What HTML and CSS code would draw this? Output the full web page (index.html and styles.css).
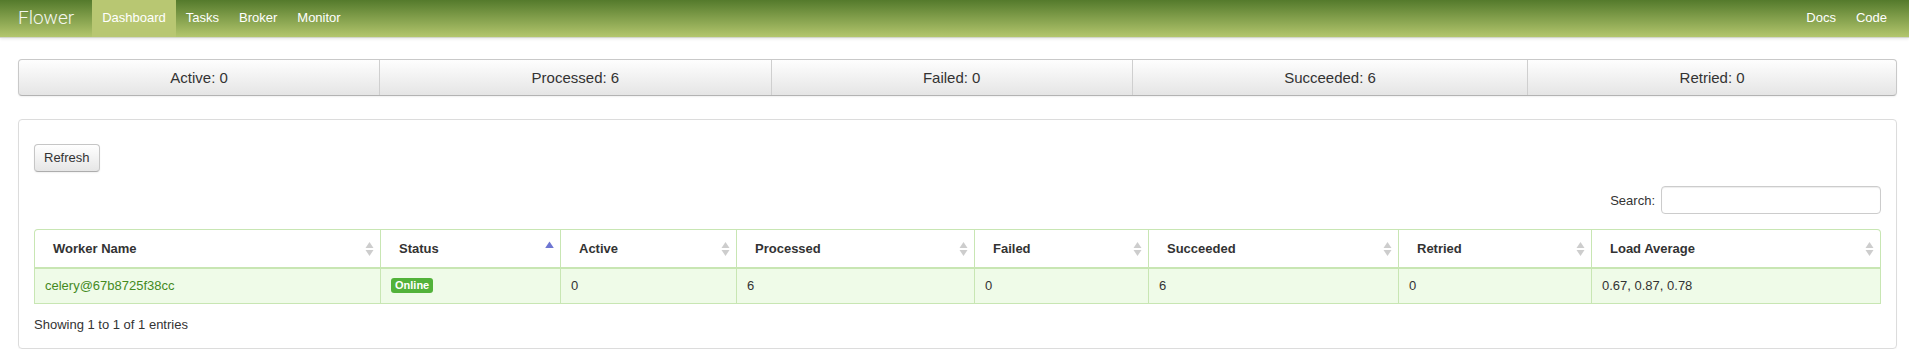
FILE: index.html
```html
<!DOCTYPE html>
<html lang="en">
<head>
<meta charset="utf-8">
<title>Flower</title>
<link rel="stylesheet" href="styles.css">
</head>
<body>
<nav class="navbar">
  <div class="nav-left">
    <a class="brand" href="#">Flower</a>
    <ul class="nav">
      <li class="active"><a href="#">Dashboard</a></li>
      <li><a href="#">Tasks</a></li>
      <li><a href="#">Broker</a></li>
      <li><a href="#">Monitor</a></li>
    </ul>
  </div>
  <ul class="nav">
    <li><a href="#">Docs</a></li>
    <li><a href="#">Code</a></li>
  </ul>
</nav>
<main class="page">
  <div class="stats">
    <div class="stat">Active: 0</div>
    <div class="stat">Processed: 6</div>
    <div class="stat">Failed: 0</div>
    <div class="stat">Succeeded: 6</div>
    <div class="stat">Retried: 0</div>
  </div>
  <section class="panel">
    <button class="btn" type="button">Refresh</button>
    <div class="search-row">
      <label class="search-label" for="q">Search:</label>
      <input id="q" class="search-input" type="text">
    </div>
    <table class="workers">
      <colgroup>
        <col class="c-name"><col class="c-status"><col class="c-active"><col class="c-processed">
        <col class="c-failed"><col class="c-succeeded"><col class="c-retried"><col class="c-load">
      </colgroup>
      <thead>
        <tr>
          <th><div class="th-in"><span>Worker Name</span><svg class="sort" width="9" height="16" viewBox="0 0 9 16"><path d="M4.5 1L8.5 7H0.5Z" fill="#cdcdcd"/><path d="M4.5 15L8.5 9H0.5Z" fill="#cdcdcd"/></svg></div></th>
          <th><div class="th-in"><span>Status</span><svg class="sort" width="9" height="16" viewBox="0 0 9 16"><path d="M4.5 0.5L8.8 7H0.2Z" fill="#6e76d2"/></svg></div></th>
          <th><div class="th-in"><span>Active</span><svg class="sort" width="9" height="16" viewBox="0 0 9 16"><path d="M4.5 1L8.5 7H0.5Z" fill="#cdcdcd"/><path d="M4.5 15L8.5 9H0.5Z" fill="#cdcdcd"/></svg></div></th>
          <th><div class="th-in"><span>Processed</span><svg class="sort" width="9" height="16" viewBox="0 0 9 16"><path d="M4.5 1L8.5 7H0.5Z" fill="#cdcdcd"/><path d="M4.5 15L8.5 9H0.5Z" fill="#cdcdcd"/></svg></div></th>
          <th><div class="th-in"><span>Failed</span><svg class="sort" width="9" height="16" viewBox="0 0 9 16"><path d="M4.5 1L8.5 7H0.5Z" fill="#cdcdcd"/><path d="M4.5 15L8.5 9H0.5Z" fill="#cdcdcd"/></svg></div></th>
          <th><div class="th-in"><span>Succeeded</span><svg class="sort" width="9" height="16" viewBox="0 0 9 16"><path d="M4.5 1L8.5 7H0.5Z" fill="#cdcdcd"/><path d="M4.5 15L8.5 9H0.5Z" fill="#cdcdcd"/></svg></div></th>
          <th><div class="th-in"><span>Retried</span><svg class="sort" width="9" height="16" viewBox="0 0 9 16"><path d="M4.5 1L8.5 7H0.5Z" fill="#cdcdcd"/><path d="M4.5 15L8.5 9H0.5Z" fill="#cdcdcd"/></svg></div></th>
          <th><div class="th-in"><span>Load Average</span><svg class="sort" width="9" height="16" viewBox="0 0 9 16"><path d="M4.5 1L8.5 7H0.5Z" fill="#cdcdcd"/><path d="M4.5 15L8.5 9H0.5Z" fill="#cdcdcd"/></svg></div></th>
        </tr>
      </thead>
      <tbody>
        <tr>
          <td><a class="worker-link" href="#">celery@67b8725f38cc</a></td>
          <td><span class="label-online">Online</span></td>
          <td>0</td>
          <td>6</td>
          <td>0</td>
          <td>6</td>
          <td>0</td>
          <td>0.67, 0.87, 0.78</td>
        </tr>
      </tbody>
    </table>
    <div class="info">Showing 1 to 1 of 1 entries</div>
  </section>
</main>
</body>
</html>
```
FILE: styles.css
```css
* { box-sizing: border-box; }

body {
  margin: 0;
  font-family: "Liberation Sans", Arial, sans-serif;
  font-size: 13px;
  color: #333;
  background: #fff;
}

/* Navbar */
.navbar {
  display: flex;
  justify-content: space-between;
  height: 38px;
  padding: 0 12px 0 18px;
  background: linear-gradient(#547a2c, #b3c66d);
  border-bottom: 1px solid #d3d6cb;
  box-shadow: 0 1px 3px rgba(0, 0, 0, 0.10);
}

.nav-left {
  display: flex;
  align-items: stretch;
}

.brand {
  display: flex;
  align-items: center;
  padding-bottom: 3px;
  margin-right: 18px;
  font-family: Roboto, "Liberation Sans", sans-serif;
  font-weight: 300;
  font-size: 19px;
  color: #f4f6ef;
  text-decoration: none;
}

.nav {
  display: flex;
  list-style: none;
  margin: 0;
  padding: 0;
}

.nav li {
  display: flex;
}

.nav a {
  display: flex;
  align-items: center;
  padding: 0 10px 3px;
  color: #fff;
  text-decoration: none;
  font-size: 13px;
}

.nav .active a {
  background: #b8c772;
}

/* Page */
.page {
  padding: 21px 12px 0 18px;
}

.stats {
  display: flex;
  border: 1px solid #c9c9c9;
  border-bottom-color: #b3b3b3;
  border-radius: 4px;
  background: linear-gradient(#fefefe, #e5e5e5);
  box-shadow: 0 1px 2px rgba(0, 0, 0, 0.06);
}

.stat {
  flex: 1 1 auto;
  text-align: center;
  font-size: 15px;
  line-height: 17px;
  padding: 9px 0;
  color: #333;
}

.stat + .stat {
  border-left: 1px solid #cfcfcf;
}

.panel {
  margin-top: 23px;
  border: 1px solid #dcdcdc;
  border-radius: 4px;
  padding: 24px 15px 15px;
  box-shadow: 0 1px 1px rgba(0, 0, 0, 0.04);
}

.btn {
  display: block;
  font-family: "Liberation Sans", Arial, sans-serif;
  font-size: 13px;
  line-height: 18px;
  padding: 4px 9px;
  color: #333;
  border: 1px solid #c6c6c6;
  border-bottom-color: #adadad;
  border-radius: 4px;
  background: linear-gradient(#ffffff, #e6e6e6);
  box-shadow: 0 1px 2px rgba(0, 0, 0, 0.06);
}

.search-row {
  display: flex;
  justify-content: flex-end;
  align-items: center;
  gap: 6px;
  margin-top: 14px;
}

.search-label {
  font-size: 13px;
  color: #333;
}

.search-input {
  width: 220px;
  height: 28px;
  border: 1px solid #cccccc;
  border-radius: 4px;
  box-shadow: inset 0 1px 1px rgba(0, 0, 0, 0.075);
  font: 13px "Liberation Sans", Arial, sans-serif;
  padding: 4px 6px;
}

/* Table */
.workers {
  width: 100%;
  margin-top: 15px;
  border-collapse: separate;
  border-spacing: 0;
  table-layout: fixed;
}

.c-name { width: 347px; }
.c-status { width: 180px; }
.c-active { width: 176px; }
.c-processed { width: 238px; }
.c-failed { width: 174px; }
.c-succeeded { width: 250px; }
.c-retried { width: 193px; }
.c-load { width: 289px; }

.workers th {
  text-align: left;
  font-weight: bold;
  font-size: 13px;
  line-height: 17px;
  padding: 10px 6px 10px 18px;
  background: #fff;
  color: #333;
  border-top: 1px solid #c8e6b3;
  border-right: 1px solid #c8e6b3;
  border-bottom: 2px solid #c8e6b3;
}

.workers th:first-child {
  border-left: 1px solid #c8e6b3;
  border-top-left-radius: 4px;
}

.workers th:last-child {
  border-top-right-radius: 4px;
}

.th-in {
  display: flex;
  justify-content: space-between;
  align-items: center;
}

.sort {
  display: block;
  flex: none;
}

.workers td {
  font-size: 13px;
  line-height: 17px;
  padding: 8px 10px 9px;
  background: #effbe8;
  color: #333;
  border-right: 1px solid #c8e6b3;
  border-bottom: 1px solid #c8e6b3;
}

.workers td:first-child {
  border-left: 1px solid #c8e6b3;
}

.worker-link {
  color: #448a1e;
  text-decoration: none;
}

.label-online {
  display: inline-block;
  font-size: 11px;
  font-weight: bold;
  line-height: 13px;
  padding: 1px 4px;
  color: #fff;
  background: #52b23a;
  border-radius: 3px;
  vertical-align: 1px;
}

.info {
  margin-top: 12px;
  font-size: 13px;
  line-height: 17px;
  color: #333;
}
```
